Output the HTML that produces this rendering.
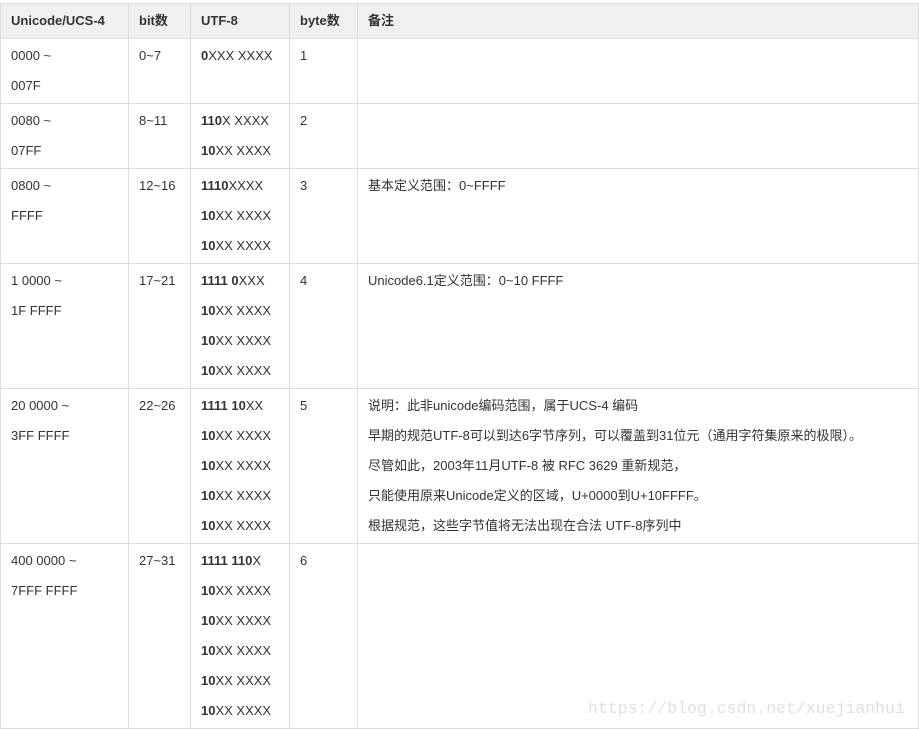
<!DOCTYPE html>
<html><head><meta charset="utf-8"><style>
html,body{margin:0;padding:0;background:#fff;width:919px;height:730px;overflow:hidden;position:relative}
table{position:absolute;left:0;top:3px;width:919px;border-collapse:collapse;table-layout:fixed;font-family:"Liberation Sans","Noto Sans CJK SC",sans-serif;font-size:13px;color:#333}
td,th{border:1px solid #ddd;padding:2px 10px 2px 10px;line-height:30px;vertical-align:top;text-align:left;white-space:nowrap;overflow:visible}
th{background:#f0f0f0;font-weight:bold;color:#333}
b{font-weight:bold}
.wm{position:absolute;left:588px;top:699px;font-family:"Liberation Mono","Noto Sans CJK SC",monospace;font-size:16.5px;color:#e0e0e0}
</style></head><body>
<table>
<colgroup><col style="width:128px"><col style="width:62px"><col style="width:99px"><col style="width:68px"><col></colgroup>
<tr><th>Unicode/UCS-4</th><th>bit数</th><th>UTF-8</th><th>byte数</th><th>备注</th></tr>
<tr><td>0000 ~<br>007F</td><td>0~7</td><td><b>0</b>XXX XXXX</td><td>1</td><td></td></tr>
<tr><td>0080 ~<br>07FF</td><td>8~11</td><td><b>110</b>X XXXX<br><b>10</b>XX XXXX</td><td>2</td><td></td></tr>
<tr><td>0800 ~<br>FFFF</td><td>12~16</td><td><b>1110</b>XXXX<br><b>10</b>XX XXXX<br><b>10</b>XX XXXX</td><td>3</td><td>基本定义范围：0~FFFF</td></tr>
<tr><td>1 0000 ~<br>1F FFFF</td><td>17~21</td><td><b>1111 0</b>XXX<br><b>10</b>XX XXXX<br><b>10</b>XX XXXX<br><b>10</b>XX XXXX</td><td>4</td><td>Unicode6.1定义范围：0~10 FFFF</td></tr>
<tr><td>20 0000 ~<br>3FF FFFF</td><td>22~26</td><td><b>1111 10</b>XX<br><b>10</b>XX XXXX<br><b>10</b>XX XXXX<br><b>10</b>XX XXXX<br><b>10</b>XX XXXX</td><td>5</td><td>说明：此非unicode编码范围，属于UCS-4 编码<br>早期的规范UTF-8可以到达6字节序列，可以覆盖到31位元（通用字符集原来的极限）。<br>尽管如此，2003年11月UTF-8 被 RFC 3629 重新规范，<br>只能使用原来Unicode定义的区域，U+0000到U+10FFFF。<br>根据规范，这些字节值将无法出现在合法 UTF-8序列中</td></tr>
<tr><td>400 0000 ~<br>7FFF FFFF</td><td>27~31</td><td><b>1111 110</b>X<br><b>10</b>XX XXXX<br><b>10</b>XX XXXX<br><b>10</b>XX XXXX<br><b>10</b>XX XXXX<br><b>10</b>XX XXXX</td><td>6</td><td></td></tr>
</table>
<div class="wm">https://blog.csdn.net/xuejianhui</div>
</body></html>
